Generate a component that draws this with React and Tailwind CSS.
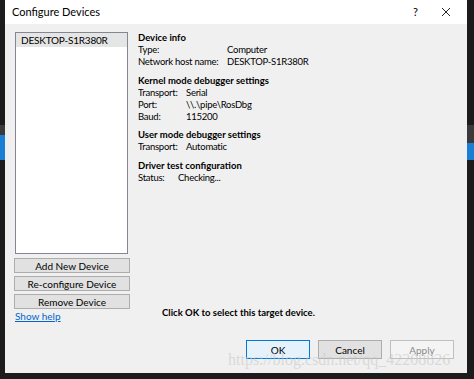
import React from "react"

const font = { fontFamily: "Lato, 'Liberation Sans', sans-serif" }

function Btn({ children, className = "" }) {
  return (
    <div className={`flex items-center justify-center border text-[10px] leading-none ${className}`}>{children}</div>
  )
}

export default function App() {
  return (
    <div className="relative w-[474px] h-[379px] overflow-hidden bg-[#1c1c1c] text-[#000]" style={font}>
      {/* desktop strips behind the dialog */}
      <div className="absolute left-0 top-[125px] w-[5px] h-[10px] bg-[#3a3a3a]" />
      <div className="absolute left-0 top-[135px] w-[5px] h-[25px] bg-[#1a7fd4]" />
      <div className="absolute right-0 top-[125px] w-[7px] h-[18px] bg-[#3a3a3a]" />
      <div className="absolute right-0 top-[143px] w-[7px] h-[17px] bg-[#1a7fd4]" />

      <div className="relative ml-[5px] w-[462px] h-[373px] flex flex-col bg-[#f0f0f0]">
        {/* title bar */}
        <div className="h-[24px] bg-white flex items-center pl-[7px] pr-[14px]">
          <span className="text-[11px]">Configure Devices</span>
          <span className="ml-auto text-[11px] mr-[23px]">?</span>
          <svg width="10" height="10" viewBox="0 0 10 10" className="mr-[2px]">
            <path d="M1 1L9 9M9 1L1 9" stroke="#222" strokeWidth="1" />
          </svg>
        </div>

        {/* body */}
        <div className="flex-1 flex flex-col pt-[8px]">
          <div className="flex">
            <div className="ml-[9px] w-[116px] flex flex-col">
              <div className="ml-[1px] w-[113px] h-[222px] bg-white border border-[#828790]">
                <div className="h-[14px] bg-[#e5e5e5] flex items-center pl-[5px] text-[10px] tracking-[-0.2px]">DESKTOP-S1R380R</div>
              </div>
              <div className="mt-[4px] flex flex-col gap-[3px]">
                <Btn className="h-[15px] bg-[#e1e1e1] border-[#adadad]">Add New Device</Btn>
                <Btn className="h-[15px] bg-[#e1e1e1] border-[#adadad]">Re-configure Device</Btn>
                <Btn className="h-[15px] bg-[#e1e1e1] border-[#adadad]">Remove Device</Btn>
              </div>
              <a className="mt-[1px] ml-[1px] text-[10px] leading-[12px] text-[#0066cc] underline">Show help</a>
            </div>

            <div className="ml-[8px] flex-1 flex flex-col text-[9.5px] leading-[12px] whitespace-nowrap">
              <div className="font-bold">Device info</div>
              <div className="grid grid-cols-[89px_1fr] tracking-[-0.25px]">
                <span>Type:</span><span>Computer</span>
                <span>Network host name:</span><span>DESKTOP-S1R380R</span>
              </div>
              <div className="font-bold mt-[7px]">Kernel mode debugger settings</div>
              <div className="grid grid-cols-[48px_1fr] tracking-[-0.25px]">
                <span>Transport:</span><span>Serial</span>
                <span>Port:</span><span>\\.\pipe\RosDbg</span>
                <span>Baud:</span><span>115200</span>
              </div>
              <div className="font-bold mt-[6px]">User mode debugger settings</div>
              <div className="grid grid-cols-[48px_1fr] tracking-[-0.25px]">
                <span>Transport:</span><span>Automatic</span>
              </div>
              <div className="font-bold mt-[7px]">Driver test configuration</div>
              <div className="grid grid-cols-[40px_1fr] tracking-[-0.25px]">
                <span>Status:</span><span>Checking...</span>
              </div>
              <div className="mt-auto mb-[3px] ml-[24px] font-bold">Click OK to select this target device.</div>
            </div>
          </div>

          <div className="mt-auto mb-[14px] mr-[13px] flex justify-end gap-[8px]">
            <Btn className="w-[64px] h-[19px] bg-[#e5f1fb] border-[#0078d7]">OK</Btn>
            <Btn className="w-[64px] h-[19px] bg-[#e1e1e1] border-[#adadad]">Cancel</Btn>
            <Btn className="w-[64px] h-[19px] bg-[#f4f4f4] border-[#bfbfbf] text-[#8a8a8a]">Apply</Btn>
          </div>
        </div>
      </div>

      {/* watermark */}
      <div
        className="absolute left-[228px] top-[350px] text-[16px] leading-[20px] text-[#c8c8c8]/60 whitespace-nowrap"
        style={{ fontFamily: "'Liberation Serif', serif" }}
      >
        https://blog.csdn.net/qq_42208826
      </div>
    </div>
  )
}
